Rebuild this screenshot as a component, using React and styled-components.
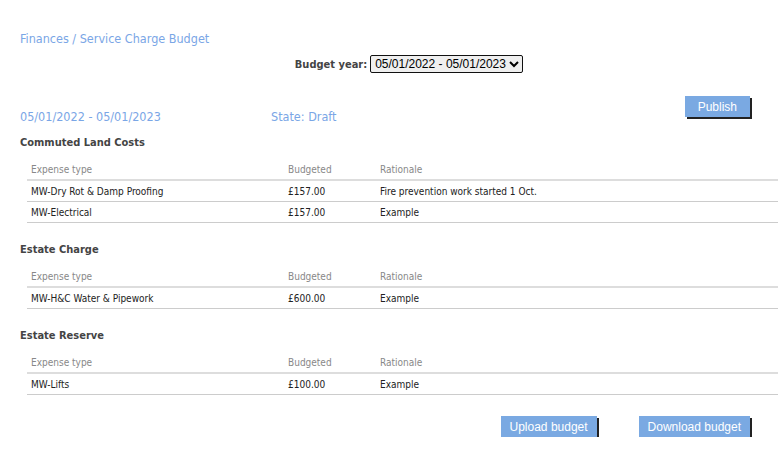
import styled, { createGlobalStyle } from "styled-components";

const Global = createGlobalStyle`
  body { margin: 0; background: #fff; font-family: "DejaVu Sans Condensed", "DejaVu Sans", sans-serif; color: #333; }
`;

const Page = styled.div`
  padding: 31px 4px 0 20px;
  width: 782px;
  box-sizing: border-box;
`;
const Crumb = styled.div`
  color: #7aa6e6;
  font-size: 12.5px;
  height: 18px;
`;
const YearRow = styled.div`
  display: flex;
  justify-content: center;
  align-items: center;
  gap: 3px;
  margin: 6px 0 0 20px;
  font-size: 11px;
  font-weight: bold;
  color: #444;
`;
const Select = styled.select`
  font-family: "Liberation Sans", Arial, sans-serif;
  font-size: 12px;
  border: 1.5px solid #111;
  border-radius: 2px;
  height: 18px;
  padding: 0;
`;
const HeadRow = styled.div`
  display: flex;
  align-items: flex-start;
  margin-top: 23px;
  padding-right: 28px;
`;
const HeadText = styled.div`
  color: #7aa6e6;
  font-size: 12.5px;
  margin-top: 13px;
  width: ${(p) => p.w || "auto"};
`;
const Button = styled.button`
  background: #7aa9e2;
  color: #fff;
  border: none;
  font-family: "Liberation Sans", Arial, sans-serif;
  font-size: 12px;
  height: 21px;
  padding: 0 ${(p) => p.px || 12}px;
  box-shadow: 2px 2px 0 #222;
  margin-left: ${(p) => p.ml || 0};
`;
const SectionTitle = styled.div`
  font-size: 11px;
  font-weight: bold;
  color: #444;
  margin: ${(p) => p.mt || 17}px 0 10px;
`;
const Table = styled.div`
  margin-left: 7px;
  font-size: 10px;
`;
const Row = styled.div`
  display: grid;
  grid-template-columns: 257px 92px 1fr;
  height: 20px;
  align-items: center;
  padding-left: 4px;
  border-bottom: ${(p) => (p.head ? "2px solid #ddd" : "1px solid #ccc")};
  color: ${(p) => (p.head ? "#888" : "#222")};
`;
const Footer = styled.div`
  display: flex;
  justify-content: flex-end;
  padding-right: 28px;
  margin-top: 21px;
`;

const sections = [
  { title: "Commuted Land Costs", rows: [["MW-Dry Rot & Damp Proofing", "£157.00", "Fire prevention work started 1 Oct."], ["MW-Electrical", "£157.00", "Example"]] },
  { title: "Estate Charge", rows: [["MW-H&C Water & Pipework", "£600.00", "Example"]] },
  { title: "Estate Reserve", rows: [["MW-Lifts", "£100.00", "Example"]] },
];

export default function App() {
  return (
    <Page>
      <Global />
      <Crumb>Finances / Service Charge Budget</Crumb>
      <YearRow>
        Budget year:
        <Select defaultValue="a">
          <option value="a">05/01/2022 - 05/01/2023</option>
        </Select>
      </YearRow>
      <HeadRow>
        <HeadText w="251px">05/01/2022 - 05/01/2023</HeadText>
        <HeadText>State: Draft</HeadText>
        <Button ml="auto" px={13}>Publish</Button>
      </HeadRow>
      {sections.map((s, i) => (
        <div key={s.title}>
          <SectionTitle mt={i === 0 ? 12 : 20}>{s.title}</SectionTitle>
          <Table>
            <Row head>
              <span>Expense type</span>
              <span>Budgeted</span>
              <span>Rationale</span>
            </Row>
            {s.rows.map((r) => (
              <Row key={r[0]}>
                {r.map((c) => <span key={c}>{c}</span>)}
              </Row>
            ))}
          </Table>
        </div>
      ))}
      <Footer>
        <Button px={9}>Upload budget</Button>
        <Button ml="42px" px={9}>Download budget</Button>
      </Footer>
    </Page>
  );
}
